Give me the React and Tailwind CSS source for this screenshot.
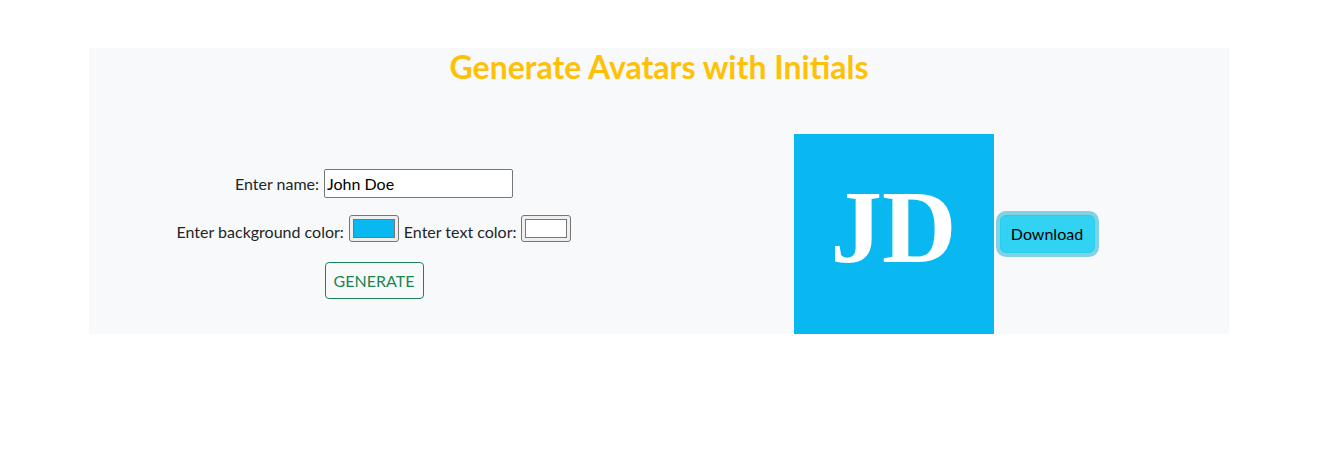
import { useState } from 'react'

const font = { fontFamily: 'Lato, "Open Sans", sans-serif' }

function ColorSwatch({ color }) {
  return (
    <div className="inline-flex h-[27px] w-[50px] items-center justify-center rounded-[3px] border border-[#767676] bg-[#efefef] px-[3px] py-[3px]">
      <div className="h-full w-full border border-[#777]" style={{ background: color }} />
    </div>
  )
}

export default function App() {
  const [name, setName] = useState('John Doe')
  const [bg] = useState('#0ab8f1')
  const [fg] = useState('#ffffff')

  const initials = name
    .split(' ')
    .filter(Boolean)
    .map(w => w[0].toUpperCase())
    .join('')

  return (
    <div className="h-[460px] overflow-hidden bg-white pt-12 text-[#212529]" style={font}>
      <div className="mx-auto w-[1140px] bg-[#f8f9fa]">
        <h2 className="mb-2 text-center text-[32px] font-bold leading-[38px] text-[#ffc107]">
          Generate Avatars with Initials
        </h2>

        {/* Form + preview */}
        <div className="grid h-[240px] grid-cols-2 pt-10">
          <div className="flex flex-col items-center justify-center text-base">
            <div className="flex h-[29px] items-center gap-[5px]">
              <span>Enter name:</span>
              <input
                value={name}
                onChange={e => setName(e.target.value)}
                className="h-[29px] w-[189px] rounded-[2px] border border-[#767676] bg-white px-[2px] text-base text-black outline-none"
              />
            </div>
            <div className="mt-[17px] flex h-[27px] items-baseline gap-[5px]">
              <span>Enter background color:</span>
              <ColorSwatch color={bg} />
              <span>Enter text color:</span>
              <ColorSwatch color={fg} />
            </div>
            <button className="mt-5 h-[37px] w-[99px] rounded-[4px] border border-[#198754] text-base uppercase text-[#198754]">
              Generate
            </button>
          </div>

          <div className="flex items-center justify-center">
            <div
              className="flex h-[200px] w-[200px] items-center justify-center pb-[14px] text-[103px] font-bold leading-none"
              style={{ background: bg, color: fg, fontFamily: '"Liberation Serif", serif' }}
            >
              {initials}
            </div>
            <button className="ml-[6px] h-[38px] w-[95px] rounded-[6px] border border-[#25cff2] bg-[#31d2f2] text-base text-black shadow-[0_0_0_4px_rgba(11,172,204,0.5)]">
              Download
            </button>
          </div>
        </div>
      </div>
    </div>
  )
}
